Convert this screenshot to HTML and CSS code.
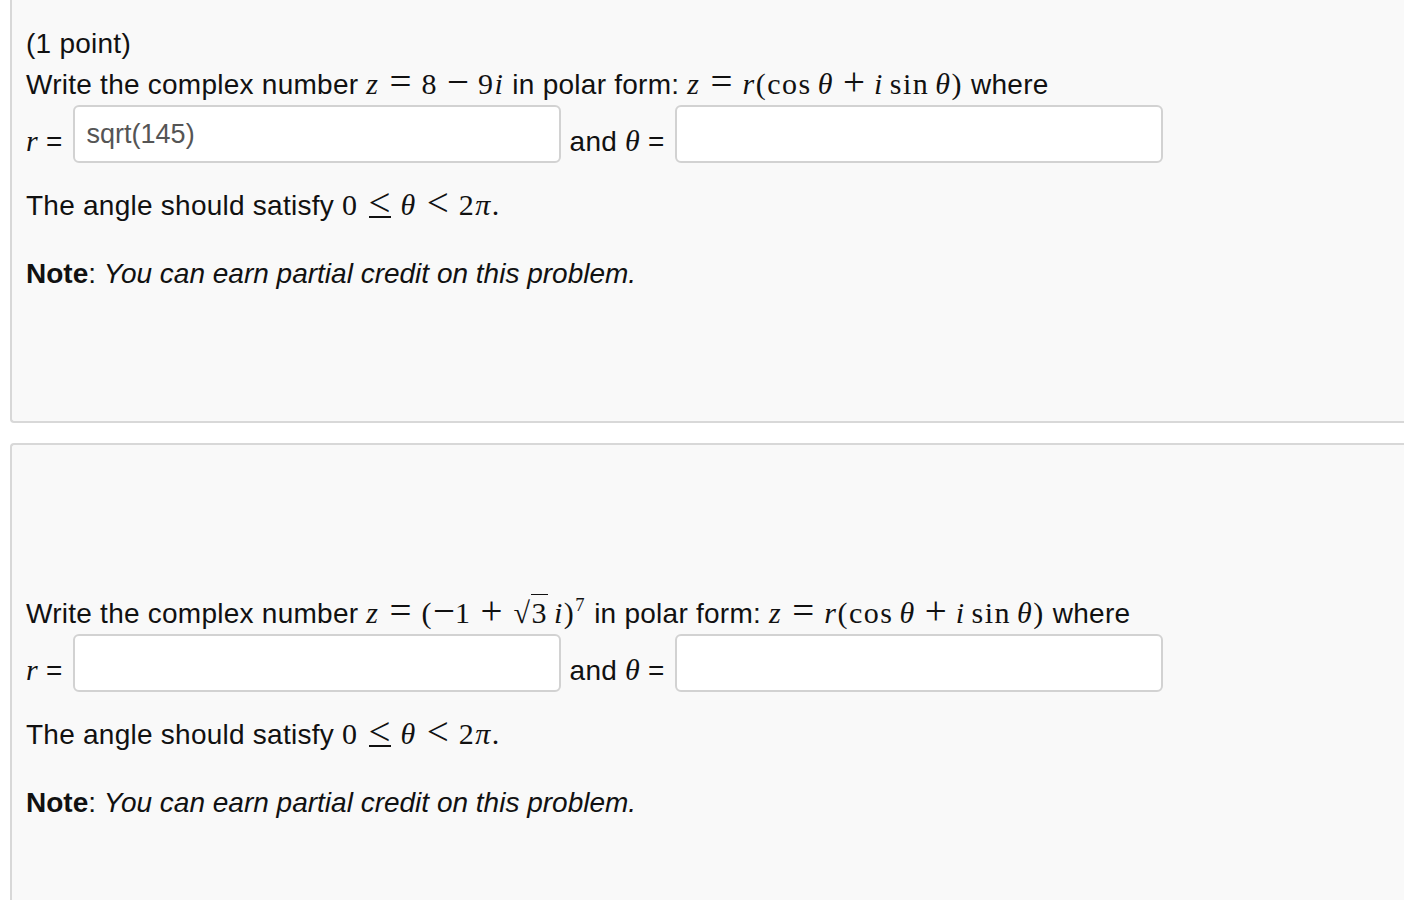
FILE: index.html
```html
<!DOCTYPE html>
<html lang="en">
<head>
  <meta charset="UTF-8">
  <meta name="viewport" content="width=device-width, initial-scale=1.0">
  <title>Polar form</title>
  <link rel="stylesheet" href="styles.css">
</head>
<body>
  <div class="problem first">
    <p class="points">(1 point)</p>
    <p class="line">Write the complex number <span class="math"><i>z</i><span class="rel">=</span>8<span class="bin">−</span>9<i>i</i></span> in polar form: <span class="math"><i>z</i><span class="rel">=</span><i>r</i>(cos<span class="thin"></span><i>θ</i><span class="bin">+</span><i>i</i><span class="thin"></span>sin<span class="thin"></span><i>θ</i>)</span> where</p>
    <div class="answers">
      <span class="label"><i class="var">r</i> =</span>
      <input class="ans" type="text" value="sqrt(145)">
      <span class="label">and <i class="var">θ</i> =</span>
      <input class="ans" type="text">
    </div>
    <p class="angle">The angle should satisfy <span class="math">0<span class="rel"><span class="le">&lt;</span></span><i>θ</i><span class="rel">&lt;</span>2<i>π</i>.</span></p>
    <p class="note"><b>Note</b>: <em>You can earn partial credit on this problem.</em></p>
  </div>

  <div class="problem second">
    <p class="line">Write the complex number <span class="math"><i>z</i><span class="rel">=</span>(<span class="neg">−</span>1<span class="bin">+</span><span class="radical">√</span><span class="radicand">3</span><span class="thin"></span><i>i</i>)<sup>7</sup></span> in polar form: <span class="math"><i>z</i><span class="rel">=</span><i>r</i>(cos<span class="thin"></span><i>θ</i><span class="bin">+</span><i>i</i><span class="thin"></span>sin<span class="thin"></span><i>θ</i>)</span> where</p>
    <div class="answers">
      <span class="label"><i class="var">r</i> =</span>
      <input class="ans" type="text">
      <span class="label">and <i class="var">θ</i> =</span>
      <input class="ans" type="text">
    </div>
    <p class="angle">The angle should satisfy <span class="math">0<span class="rel"><span class="le">&lt;</span></span><i>θ</i><span class="rel">&lt;</span>2<i>π</i>.</span></p>
    <p class="note"><b>Note</b>: <em>You can earn partial credit on this problem.</em></p>
  </div>
</body>
</html>
```

FILE: styles.css
```css
body {
  margin: 0;
  background: #ffffff;
  color: #111;
  font-family: "Liberation Sans", Arial, sans-serif;
  font-size: 28px;
  line-height: 40px;
  letter-spacing: 0.25px;
  overflow: hidden;
}
p {
  margin: 0;
}
.problem {
  background-color: #f9f9f9;
  border: 2px solid #d8d8d8;
  border-right: none;
  border-radius: 4px 0 0 4px;
  margin-left: 10px;
  padding-left: 14px;
}
.first {
  border-top: none;
  border-top-left-radius: 0;
  padding-top: 24px;
  padding-bottom: 127px;
  margin-bottom: 20px;
}
.second {
  padding-top: 148px;
  padding-bottom: 120px;
}
.math {
  font-family: "Liberation Serif", "Times New Roman", serif;
  font-size: 30px;
  letter-spacing: 1.5px;
}
.math i {
  font-style: italic;
}
.rel,
.bin,
.neg {
  font-size: 39px;
  line-height: 20px;
  vertical-align: -1px;
  letter-spacing: 0;
}
.rel {
  padding: 0 10px;
}
.bin {
  padding: 0 9px;
}
.thin {
  display: inline-block;
  width: 0.2em;
}
.le {
  display: inline-block;
  line-height: 0.62em;
  border-bottom: 2px solid #111;
  padding-bottom: 1px;
}
.radical {
  margin-left: 2px;
}
.radicand {
  border-top: 1.5px solid #111;
  padding-top: 1px;
  line-height: 1;
}
sup {
  font-size: 0.62em;
  line-height: 0;
  vertical-align: 0.62em;
}
.answers {
  display: flex;
  align-items: flex-end;
  height: 58px;
}
.label {
  line-height: 30px;
  padding-bottom: 6px;
  margin-right: 10px;
}
.var {
  font-family: "Liberation Serif", "Times New Roman", serif;
  font-size: 30px;
}
.ans {
  box-sizing: border-box;
  width: 488px;
  height: 58px;
  border: 2px solid #d2d2d2;
  border-radius: 6px;
  background: #fff;
  padding: 0 12px;
  font-family: "Liberation Sans", Arial, sans-serif;
  font-size: 27px;
  color: #555;
  margin-right: 9px;
}
.angle {
  margin-top: 22px;
}
.note {
  margin-top: 28px;
  letter-spacing: 0;
}
```
